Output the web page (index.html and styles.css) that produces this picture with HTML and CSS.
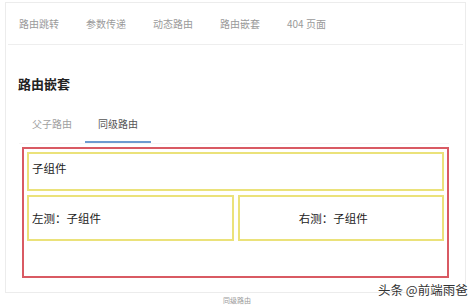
FILE: index.html
```html
<!DOCTYPE html>
<html>
<head>
  <meta name="viewport" content="width=device-width, initial-scale=1.0">
  <title>路由嵌套</title>
  <link rel="stylesheet" href="styles.css">
</head>
<body>
  <!-- Card -->
  <div class="card">
    <!-- Top nav -->
    <div class="nav">
      <span class="nav-item">路由跳转</span>
      <span class="nav-item">参数传递</span>
      <span class="nav-item">动态路由</span>
      <span class="nav-item">路由嵌套</span>
      <span class="nav-item">404 页面</span>
    </div>

    <div class="section">
      <h2 class="title">路由嵌套</h2>
      <div class="tabs">
        <span class="tab">父子路由</span>
        <span class="tab active">同级路由</span>
      </div>

      <!-- Router view -->
      <div class="view">
        <div class="child">子组件</div>
        <div class="row">
          <div class="child side">左测：子组件</div>
          <div class="child side center">右测：子组件</div>
        </div>
      </div>
    </div>
  </div>
  <div class="caption">同级路由</div>
  <div class="watermark">头条 @前端雨爸</div>
</body>
</html>
```

FILE: styles.css
```css
html, body {
  margin: 0;
  padding: 0;
}
body {
  width: 474px;
  height: 308px;
  overflow: hidden;
  position: relative;
  background-color: #ffffff;
  font-family: "Noto Sans CJK SC", "Noto Sans", sans-serif;
  color: #333;
}
.card {
  margin: 2px 0 0 5px;
  width: 459px;
  height: 289px;
  border: 1px solid #ececec;
  background-color: #fff;
}
.nav {
  display: flex;
  align-items: center;
  height: 41px;
  margin: 0 2px;
  padding-left: 11px;
  border-bottom: 1px solid #eeeeee;
}
.nav-item {
  font-size: 10px;
  line-height: 14px;
  color: #9a9a9a;
  margin-right: 27px;
}
.section {
  padding: 0 16px 0 16px;
}
.title {
  margin: 30px 0 0 -4px;
  font-size: 13px;
  line-height: 18px;
  font-weight: bold;
  color: #222;
}
.tabs {
  display: flex;
  margin: 17px 0 0 -3px;
  border-bottom: 1px solid #f6f6f6;
}
.tab {
  padding: 8px 13px 11px;
  font-size: 10px;
  line-height: 12px;
  color: #a0a0a0;
  border-bottom: 2px solid transparent;
}
.tab.active {
  color: #555;
  border-bottom-color: #6e9bd0;
}
.view {
  box-sizing: border-box;
  margin-top: 3px;
  height: 131px;
  padding: 3px 3px 0 3px;
  border: 2px solid #d95a63;
}
.child {
  box-sizing: border-box;
  height: 39px;
  padding: 6px 3px 0;
  border: 2px solid #ebe27a;
  font-size: 11.5px;
  line-height: 16px;
  color: #222;
}
.row {
  display: grid;
  grid-template-columns: 1fr 1fr;
  gap: 4px;
  margin-top: 4px;
}
.child.side {
  height: 46px;
  padding: 0 3px;
  display: flex;
  align-items: center;
}
.child.center {
  justify-content: center;
  padding-right: 18px;
}
.caption {
  text-align: center;
  font-size: 7px;
  line-height: 10px;
  color: #999;
  margin-top: 2px;
}
.watermark {
  position: absolute;
  left: 378px;
  top: 282px;
  font-size: 12.5px;
  line-height: 16px;
  color: #333;
  text-shadow: 0 0 2px #fff, 0 0 2px #fff;
}
```
